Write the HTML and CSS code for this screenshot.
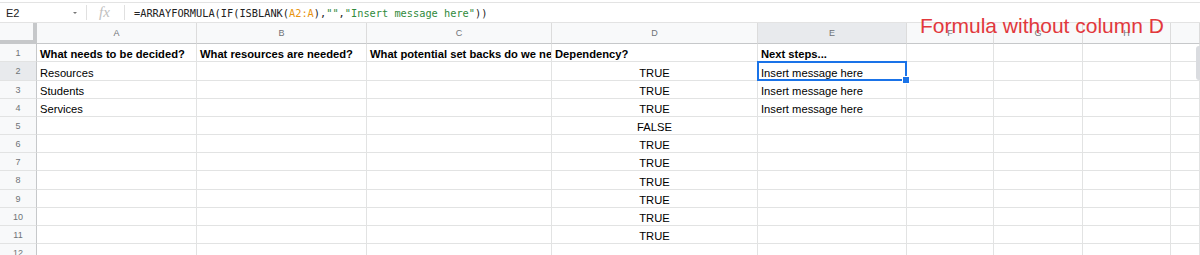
FILE: index.html
```html
<!DOCTYPE html>
<html lang="en">
<head>
    <meta charset="UTF-8">
    <meta name="viewport" content="width=device-width, initial-scale=1.0">
    <title>Next steps sheet</title>
    <link rel="stylesheet" href="styles.css">
</head>

<body>
    <div class="sheet">
        <div class="formula-bar">
            <div class="name-box">
                <span>E2</span>
                <span class="caret"></span>
            </div>
            <div class="fx">fx</div>
            <div class="formula">=ARRAYFORMULA(IF(ISBLANK(<span class="ref">A2:A</span>),<span class="str">""</span>,<span class="str">"Insert message here"</span>))</div>
        </div>

        <div class="grid">
            <!-- column headers -->
            <div class="corner"></div>
            <div class="ch">A</div>
            <div class="ch">B</div>
            <div class="ch">C</div>
            <div class="ch">D</div>
            <div class="ch active">E</div>
            <div class="ch">F</div>
            <div class="ch">G</div>
            <div class="ch">H</div>
            <div class="ch"></div>

            <!-- row 1 -->
            <div class="rh">1</div>
            <div class="c b">What needs to be decided?</div>
            <div class="c b">What resources are needed?</div>
            <div class="c b clip">What potential set backs do we need to consider?</div>
            <div class="c b">Dependency?</div>
            <div class="c b">Next steps...</div>
            <div class="c"></div><div class="c"></div><div class="c"></div><div class="c"></div>

            <!-- row 2 -->
            <div class="rh active">2</div>
            <div class="c">Resources</div>
            <div class="c"></div>
            <div class="c"></div>
            <div class="c ctr">TRUE</div>
            <div class="c selected">Insert message here<div class="sel"><div class="handle"></div></div></div>
            <div class="c"></div><div class="c"></div><div class="c"></div><div class="c"></div>

            <!-- row 3 -->
            <div class="rh">3</div>
            <div class="c">Students</div>
            <div class="c"></div>
            <div class="c"></div>
            <div class="c ctr">TRUE</div>
            <div class="c">Insert message here</div>
            <div class="c"></div><div class="c"></div><div class="c"></div><div class="c"></div>

            <!-- row 4 -->
            <div class="rh">4</div>
            <div class="c">Services</div>
            <div class="c"></div>
            <div class="c"></div>
            <div class="c ctr">TRUE</div>
            <div class="c">Insert message here</div>
            <div class="c"></div><div class="c"></div><div class="c"></div><div class="c"></div>

            <!-- row 5 -->
            <div class="rh">5</div>
            <div class="c"></div><div class="c"></div><div class="c"></div>
            <div class="c ctr">FALSE</div>
            <div class="c"></div><div class="c"></div><div class="c"></div><div class="c"></div><div class="c"></div>

            <!-- row 6 -->
            <div class="rh">6</div>
            <div class="c"></div><div class="c"></div><div class="c"></div>
            <div class="c ctr">TRUE</div>
            <div class="c"></div><div class="c"></div><div class="c"></div><div class="c"></div><div class="c"></div>

            <!-- row 7 -->
            <div class="rh">7</div>
            <div class="c"></div><div class="c"></div><div class="c"></div>
            <div class="c ctr">TRUE</div>
            <div class="c"></div><div class="c"></div><div class="c"></div><div class="c"></div><div class="c"></div>

            <!-- row 8 -->
            <div class="rh">8</div>
            <div class="c"></div><div class="c"></div><div class="c"></div>
            <div class="c ctr">TRUE</div>
            <div class="c"></div><div class="c"></div><div class="c"></div><div class="c"></div><div class="c"></div>

            <!-- row 9 -->
            <div class="rh">9</div>
            <div class="c"></div><div class="c"></div><div class="c"></div>
            <div class="c ctr">TRUE</div>
            <div class="c"></div><div class="c"></div><div class="c"></div><div class="c"></div><div class="c"></div>

            <!-- row 10 -->
            <div class="rh">10</div>
            <div class="c"></div><div class="c"></div><div class="c"></div>
            <div class="c ctr">TRUE</div>
            <div class="c"></div><div class="c"></div><div class="c"></div><div class="c"></div><div class="c"></div>

            <!-- row 11 -->
            <div class="rh">11</div>
            <div class="c"></div><div class="c"></div><div class="c"></div>
            <div class="c ctr">TRUE</div>
            <div class="c"></div><div class="c"></div><div class="c"></div><div class="c"></div><div class="c"></div>

            <!-- row 12 -->
            <div class="rh">12</div>
            <div class="c"></div><div class="c"></div><div class="c"></div>
            <div class="c"></div>
            <div class="c"></div><div class="c"></div><div class="c"></div><div class="c"></div><div class="c"></div>
        </div>

        <div class="scroll-thumb"></div>
        <div class="note">Formula without column D</div>
    </div>
</body>
</html>
```

FILE: styles.css
```css
body {
    margin: 0;
    padding: 0;
    background: #ffffff;
    font-family: "Liberation Sans", Arial, sans-serif;
    color: #000000;
}

.sheet {
    position: relative;
    width: 1200px;
    height: 255px;
    overflow: hidden;
    padding-top: 2px;
    box-sizing: border-box;
}

/* formula bar */

.formula-bar {
    display: flex;
    align-items: center;
    height: 21px;
    box-sizing: border-box;
    border-top: 1px solid #e3e3e3;
    border-bottom: 1px solid #e3e3e3;
}

.name-box {
    display: flex;
    align-items: center;
    justify-content: space-between;
    width: 87px;
    height: 15px;
    box-sizing: border-box;
    padding: 0 9px 0 6px;
    border-right: 1px solid #e0e0e0;
    font-size: 11px;
    color: #222222;
}

.caret {
    width: 0;
    height: 0;
    border-left: 2px solid transparent;
    border-right: 2px solid transparent;
    border-top: 2px solid #777777;
}

.fx {
    width: 38px;
    height: 15px;
    box-sizing: border-box;
    padding-left: 12px;
    border-right: 1px solid #e0e0e0;
    font-family: "Liberation Serif", serif;
    font-style: italic;
    font-size: 15px;
    line-height: 14px;
    color: #c0c0c0;
}

.formula {
    padding-left: 9px;
    font-family: "DejaVu Sans Mono", monospace;
    font-size: 10.3px;
    color: #222222;
    white-space: nowrap;
}

.formula .ref {
    color: #e8940f;
}

.formula .str {
    color: #2f8a3b;
}

/* grid */

.grid {
    display: grid;
    grid-template-columns: 37px 160px 170px 185px 206px 149px 87px 89px 88px 1fr;
    grid-template-rows: 21px 18px 19px 18px 18px 18px 18px 18px 19px 18px 18px 18px 18px;
}

.corner {
    background: #f8f9fa;
    border-right: 4px solid #c6c8ca;
    border-bottom: 4px solid #c6c8ca;
}

.ch {
    display: flex;
    align-items: center;
    justify-content: center;
    background: #f8f9fa;
    border-right: 1px solid #dcdcdc;
    border-bottom: 1px solid #c6c8ca;
    font-size: 9px;
    color: #6f7377;
}

.rh {
    display: flex;
    align-items: center;
    justify-content: center;
    background: #f8f9fa;
    border-right: 1px solid #c6c8ca;
    border-bottom: 1px solid #e2e3e3;
    font-size: 9px;
    color: #6f7377;
}

.ch.active,
.rh.active {
    background: #e8eaed;
}

.c {
    position: relative;
    display: flex;
    align-items: flex-end;
    padding: 0 3px;
    border-right: 1px solid #e2e3e3;
    border-bottom: 1px solid #e2e3e3;
    font-size: 11.2px;
    line-height: 14px;
    white-space: nowrap;
    min-width: 0;
}

.c.b {
    font-weight: bold;
}

.c.ctr {
    justify-content: center;
}

.c.clip {
    overflow: hidden;
    padding-right: 0;
}

.sel {
    position: absolute;
    left: -1px;
    top: -1px;
    right: -1px;
    bottom: -1px;
    border: 2px solid #1a73e8;
    z-index: 2;
}

.handle {
    position: absolute;
    right: -5px;
    bottom: -5px;
    width: 6px;
    height: 6px;
    background: #1a73e8;
    border: 1px solid #ffffff;
}

.scroll-thumb {
    position: absolute;
    right: 0;
    top: 46px;
    width: 4px;
    height: 34px;
    background: #dadce0;
    border-radius: 3px 0 0 3px;
}

.note {
    position: absolute;
    left: 920px;
    top: 15px;
    font-size: 21px;
    line-height: 21px;
    color: #e2383c;
    white-space: nowrap;
}
```
